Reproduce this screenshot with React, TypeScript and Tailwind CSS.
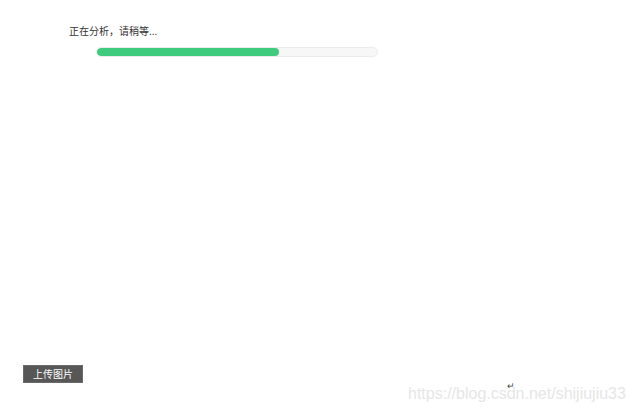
export default function App() {
  const progress = 65;

  return (
    <main
      className="relative w-[635px] h-[414px] bg-white overflow-hidden"
      style={{ fontFamily: '"Microsoft YaHei", "Noto Sans CJK SC", "Liberation Sans", sans-serif' }}
    >
      <div className="pt-[24px] pl-[69px]">
        <p className="text-[10px] leading-[14px] text-[#333]">正在分析，请稍等...</p>
        <div className="mt-[9px] ml-[27px] w-[282px] h-[10px] rounded-full bg-[#f7f7f7] border border-[#ececec] overflow-hidden">
          <div className="h-full rounded-full bg-[#3ecb7e]" style={{ width: `${progress}%` }} />
        </div>
      </div>

      <button className="absolute left-[23px] top-[365px] w-[60px] h-[18px] bg-[#575757] border border-[#6a6a6a] text-white text-[10px] leading-[16px]">
        上传图片
      </button>

      <span
        className="absolute left-[408px] top-[384px] text-[16px] leading-[20px] text-[#e6e6e6] whitespace-nowrap"
        style={{ fontFamily: '"Liberation Sans", Arial, sans-serif' }}
      >
        https://blog.csdn.net/shijiujiu33
      </span>

      <span className="absolute left-[507px] top-[381px] text-[9px] leading-[10px] text-[#444]">↵</span>
    </main>
  );
}
